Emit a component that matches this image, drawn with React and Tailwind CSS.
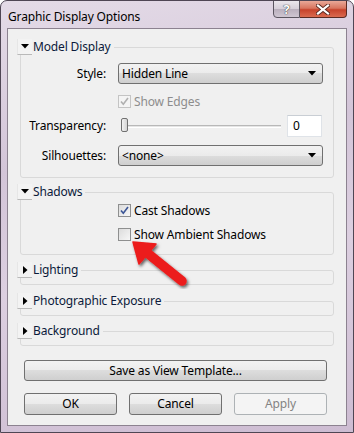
const FONT = { fontFamily: '"Segoe UI", "Noto Sans", "Open Sans", sans-serif', letterSpacing: '-0.15px' }

function Toggle({ open }) {
  return (
    <span className="flex h-[16px] w-[15px] items-center justify-center border-b border-l border-b-[#b9b9b9] border-l-[#e6e6e6] bg-[#f3f3f3]">
      {open ? (
        <svg width="8" height="5" viewBox="0 0 8 5"><path d="M0 0h8L4 4.5z" fill="#000" /></svg>
      ) : (
        <svg width="5" height="8" viewBox="0 0 5 8"><path d="M0 0v8l4.5-4z" fill="#000" /></svg>
      )}
    </span>
  )
}

function Group({ title, open, className = '', children }) {
  return (
    <fieldset className={`mx-[12px] rounded-[3px] border border-[#d9d9d9] ${className}`}>
      <legend className="-ml-[4px] flex items-center pr-[3px]">
        <Toggle open={open} />
        <span className="ml-[1px] text-[12px] leading-[16px] text-[#0b1a3a]">{title}</span>
      </legend>
      {children}
    </fieldset>
  )
}

function Combo({ value }) {
  return (
    <div className="flex h-[21px] w-[205px] items-center justify-between rounded-[3px] border border-[#707070] bg-[linear-gradient(#f2f2f2_0%,#ebebeb_50%,#dddddd_50%,#cfcfcf_100%)] pl-[3px] pr-[6px]">
      <span className="text-[12px] text-black">{value}</span>
      <svg width="8" height="5" viewBox="0 0 8 5"><path d="M0 0h8L4 4.5z" fill="#000" /></svg>
    </div>
  )
}

function Check({ checked, disabled, label }) {
  return (
    <div className="flex h-[13px] items-center">
      <span
        className={`flex h-[13px] w-[13px] items-center justify-center border ${
          disabled
            ? 'border-[#c4c4c4] bg-[#f4f4f4]'
            : 'border-[#8e8f8f] bg-[linear-gradient(135deg,#dcdcdc,#f7f7f7)]'
        }`}
      >
        {checked && (
          <svg width="9" height="9" viewBox="0 0 9 9">
            <path d="M1 4.5l2.3 2.8L8 1" fill="none" stroke={disabled ? '#b0b0b0' : '#3c5696'} strokeWidth="1.6" />
          </svg>
        )}
      </span>
      <span className={`ml-[3px] text-[12px] ${disabled ? 'text-[#8d8d8d]' : 'text-black'}`}>{label}</span>
    </div>
  )
}

function Button({ children, disabled, className = '' }) {
  return (
    <div
      className={`flex items-center justify-center rounded-[3px] border text-[12px] ${
        disabled
          ? 'border-[#adb2b5] bg-[#f4f4f4] text-[#838383]'
          : 'border-[#707070] bg-[linear-gradient(#f2f2f2_0%,#ebebeb_50%,#dddddd_50%,#cfcfcf_100%)] text-black'
      } ${className}`}
    >
      {children}
    </div>
  )
}

function Row({ label, children, className = '' }) {
  return (
    <div className={`grid grid-cols-[85px_1fr] items-center gap-x-[12px] ${className}`}>
      <span className="text-right text-[12px] text-black">{label}</span>
      {children}
    </div>
  )
}

export default function App() {
  return (
    <div
      style={FONT}
      className="relative flex h-[433px] w-[354px] flex-col overflow-hidden rounded-t-[7px] border border-[#4f4654] bg-[linear-gradient(170deg,#e4dbe7_0%,#d3c5d8_35%,#dccfe0_60%,#cdbcd2_100%)]"
    >
      {/* title bar */}
      <div className="flex h-[27px] shrink-0 items-start">
        <span className="mt-[7px] ml-[7px] text-[12px] text-black">Graphic Display Options</span>
        <div className="ml-auto mr-[6px] flex h-[18px] -mt-px">
          <div className="flex w-[27px] items-center justify-center rounded-bl-[4px] border border-[#5b5560] bg-[linear-gradient(#ebe6ec_0%,#d6ced8_50%,#b9aebc_50%,#cfc6d2_100%)]">
            <span className="text-[13px] font-bold leading-none text-white [text-shadow:0_0_1px_#333,0_0_1px_#333]">?</span>
          </div>
          <div className="flex w-[47px] items-center justify-center rounded-br-[4px] border border-l-0 border-[#5a2a22] bg-[linear-gradient(#e9a898_0%,#d8755f_45%,#c7432b_55%,#da6a4f_100%)]">
            <svg width="14" height="11" viewBox="0 0 14 11">
              <path d="M2 1.5l10 8M12 1.5l-10 8" stroke="#5a2a22" strokeWidth="4" strokeLinecap="square" />
              <path d="M2 1.5l10 8M12 1.5l-10 8" stroke="#fff" strokeWidth="2.2" strokeLinecap="square" />
            </svg>
          </div>
        </div>
      </div>

      {/* client area */}
      <div className="mx-[6px] flex h-[398px] flex-col border border-[#8c8290] bg-[#f0f0f0] pt-[10px]">
        <Group title="Model Display" open className="pb-[11px] pr-[9px]">
          <Row label="Style:" className="mt-[8px]">
            <Combo value="Hidden Line" />
          </Row>
          <Row label="" className="mt-[11px]">
            <Check checked disabled label="Show Edges" />
          </Row>
          <Row label="Transparency:" className="mt-[7px]">
            <div className="flex items-center">
              <div className="relative flex h-[22px] w-[165px] items-center">
                <div className="ml-[4px] h-[3px] w-[159px] border-t border-b border-t-[#b8b8b8] border-b-white bg-[#e5e5e5]" />
                <div className="absolute left-[3px] top-[3px] h-[14px] w-[7px] rounded-[2px] border border-[#707070] bg-[linear-gradient(90deg,#f2f2f2,#d4d4d4)]" />
              </div>
              <div className="ml-[4px] flex h-[22px] w-[35px] items-center border border-[#dfe3e8] border-t-[#c9ced4] bg-white pl-[5px] text-[12px] text-black">
                0
              </div>
            </div>
          </Row>
          <Row label="Silhouettes:" className="mt-[8px]">
            <Combo value="<none>" />
          </Row>
        </Group>

        <Group title="Shadows" open className="mt-[6px] pb-[13px]">
          <Row label="" className="mt-[4px]">
            <Check checked label="Cast Shadows" />
          </Row>
          <Row label="" className="mt-[11px]">
            <Check label="Show Ambient Shadows" />
          </Row>
        </Group>

        <Group title="Lighting" className="mt-[7px] pb-[6px]" />
        <Group title="Photographic Exposure" className="mt-[8px] pb-[6px]" />
        <Group title="Background" className="mt-[7px] pb-[6px]" />

        <div className="ml-[16px] mt-[14px] flex w-[303px] flex-col">
          <Button className="h-[21px]">Save as View Template...</Button>
          <div className="mt-[12px] flex gap-[12px]">
            <Button className="h-[22px] w-[93px]">OK</Button>
            <Button className="h-[22px] w-[93px]">Cancel</Button>
            <Button disabled className="h-[22px] w-[93px]">Apply</Button>
          </div>
        </div>
      </div>

      {/* red annotation arrow */}
      <svg className="pointer-events-none absolute left-[-1px] top-[-1px]" width="354" height="433" viewBox="0 0 354 433">
        <defs>
          <filter id="sh" x="-20%" y="-20%" width="140%" height="140%">
            <feDropShadow dx="1.5" dy="2" stdDeviation="1.5" floodColor="#000" floodOpacity="0.6" />
          </filter>
        </defs>
        <g filter="url(#sh)">
          <path d="M146 252L182 281" stroke="#ec1c1c" strokeWidth="9.5" strokeLinecap="round" />
          <path d="M133 242L156 244L139 264Z" fill="#ec1c1c" stroke="#ec1c1c" strokeWidth="1.5" strokeLinejoin="round" />
        </g>
      </svg>
    </div>
  )
}
